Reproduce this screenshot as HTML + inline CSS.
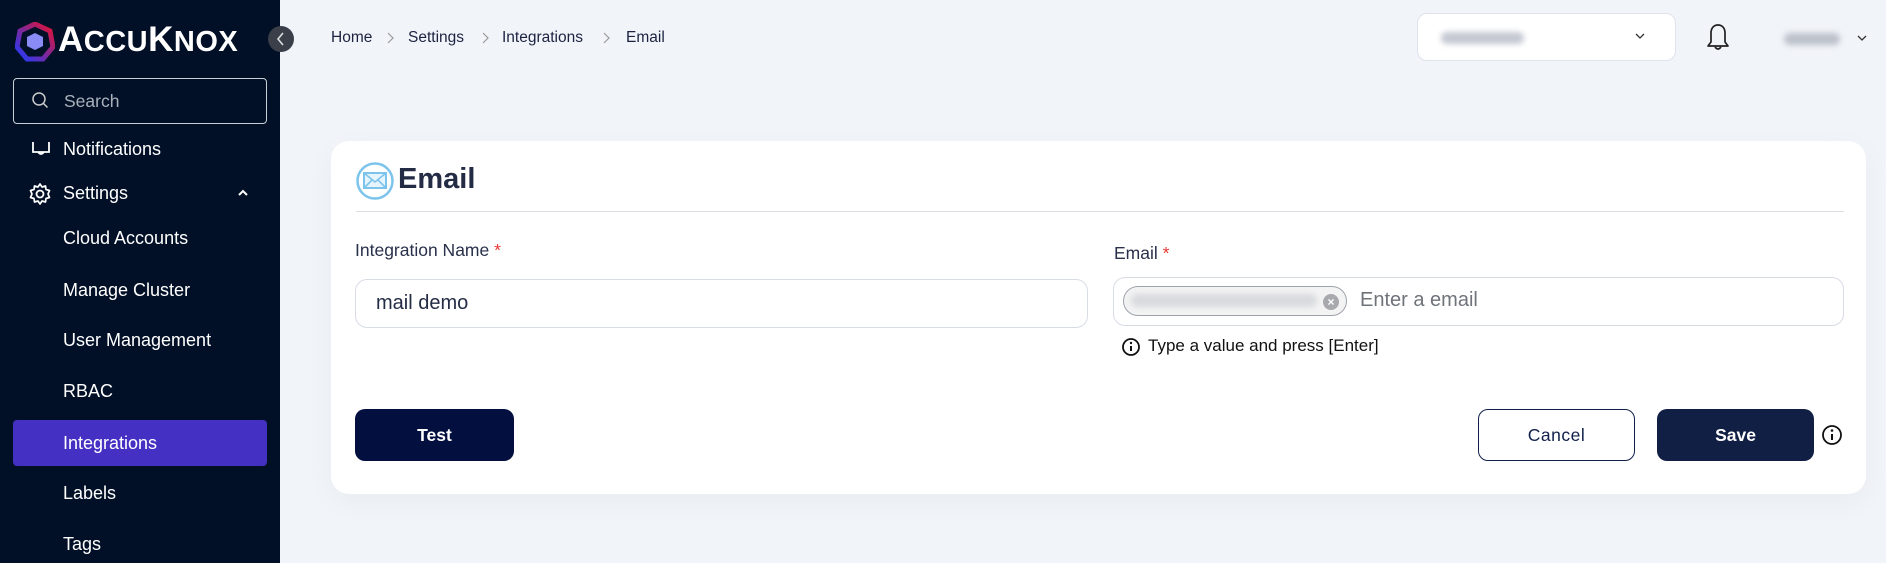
<!DOCTYPE html>
<html><head><meta charset="utf-8"><style>
*{margin:0;padding:0;box-sizing:border-box}
body{width:1886px;height:563px;overflow:hidden;background:#f1f4f9;font-family:"Liberation Sans",sans-serif;position:relative}
.abs{position:absolute}
.sb{left:0;top:0;width:280px;height:563px;background:#011026}
.nav{position:absolute;left:63px;color:#fff;font-size:18px;line-height:22px}
.bc{top:29px;font-size:15.5px;color:#1c2340}
.card{left:331px;top:141px;width:1535px;height:353px;background:#fff;border-radius:18px;box-shadow:0 8px 30px rgba(0,0,0,.04)}
.lbl{font-size:17.5px;color:#28304a}
.req{color:#e53935}
.inp{border:1px solid #d8dce6;border-radius:12px;background:#fff}
.btn{border-radius:10px;font-size:17.5px;font-weight:bold;display:flex;align-items:center;justify-content:center}
</style></head><body>
<div class="abs sb"></div>
<svg class="abs" style="left:15px;top:22px" width="40" height="40" viewBox="0 0 40 40"><defs><linearGradient id="g" x1="0" y1="1" x2="1" y2="0"><stop offset="0" stop-color="#1d3cff"/><stop offset="1" stop-color="#e8112d"/></linearGradient></defs><polygon points="20,2 35,9 38,25 28,37 12,37 2,25 5,9" fill="none" stroke="url(#g)" stroke-width="5"/><polygon points="20,11 28,15 28,24 20,28 12,24 12,15" fill="#8b8bf5"/></svg>
<div class="abs" style="left:58px;top:20px;color:#fff;font-size:35px;font-weight:bold;letter-spacing:0.5px">A<span style="font-size:29px">CCU</span>K<span style="font-size:29px">NOX</span></div>
<div class="abs" style="left:268px;top:26px;width:26px;height:26px;border-radius:50%;background:#3a3f4a"></div>
<svg class="abs" style="left:274px;top:30px" width="14" height="18"><path d="M9 3L4 9l5 6" stroke="#ddd" stroke-width="1.6" fill="none"/></svg>
<div class="abs" style="left:13px;top:78px;width:254px;height:46px;border:1.5px solid #c9ced8;border-radius:4px"></div>
<svg class="abs" style="left:31px;top:91px" width="20" height="20"><circle cx="8" cy="8" r="6" stroke="#ccc" stroke-width="1.5" fill="none"/><path d="M12.5 12.5l4 4" stroke="#ccc" stroke-width="1.5"/></svg>
<div class="abs" style="left:64px;top:91px;color:#aab1bd;font-size:17.5px">Search</div>
<svg class="abs" style="left:30px;top:140px" width="22" height="20"><path d="M3 2v10h16V2M8 12q3 4 6 0" stroke="#fff" stroke-width="1.8" fill="none"/></svg>
<div class="nav" style="top:138px">Notifications</div>
<svg class="abs" style="left:28px;top:182px" width="24" height="24" viewBox="0 0 24 24"><circle cx="12" cy="12" r="3.5" stroke="#fff" stroke-width="1.8" fill="none"/><path d="M12 2l2 3 3.5-1 .5 3.5 3.5 1-1.5 3.5 1.5 3.5-3.5 1-.5 3.5-3.5-1-2 3-2-3-3.5 1-.5-3.5-3.5-1 1.5-3.5L2.5 8.5l3.5-1L6.5 4 10 5z" stroke="#fff" stroke-width="1.7" fill="none" stroke-linejoin="round"/></svg>
<div class="nav" style="top:182px">Settings</div>
<svg class="abs" style="left:237px;top:188px" width="12" height="10"><path d="M2 7l4-4 4 4" stroke="#fff" stroke-width="2" fill="none"/></svg>
<div class="nav" style="top:227px">Cloud Accounts</div>
<div class="nav" style="top:279px">Manage Cluster</div>
<div class="nav" style="top:329px">User Management</div>
<div class="nav" style="top:380px">RBAC</div>
<div class="abs" style="left:13px;top:420px;width:254px;height:46px;background:#4430c2;border-radius:4px"></div>
<div class="nav" style="top:432px">Integrations</div>
<div class="nav" style="top:482px">Labels</div>
<div class="nav" style="top:533px">Tags</div>

<div class="abs bc" style="left:331px">Home</div>
<div class="abs bc" style="left:408px">Settings</div>
<div class="abs bc" style="left:502px">Integrations</div>
<div class="abs bc" style="left:626px">Email</div>
<svg class="abs" style="left:385px;top:31px" width="10" height="14"><path d="M3 2l5 5-5 5" stroke="#999" stroke-width="1.2" fill="none"/></svg>
<svg class="abs" style="left:480px;top:31px" width="10" height="14"><path d="M3 2l5 5-5 5" stroke="#999" stroke-width="1.2" fill="none"/></svg>
<svg class="abs" style="left:601px;top:31px" width="10" height="14"><path d="M3 2l5 5-5 5" stroke="#999" stroke-width="1.2" fill="none"/></svg>

<div class="abs" style="left:1417px;top:13px;width:259px;height:48px;background:#fff;border:1px solid #dfe3ec;border-radius:10px"></div>
<div class="abs" style="left:1441px;top:32px;width:83px;height:12px;background:#c4c8d2;border-radius:6px;filter:blur(3px)"></div>
<svg class="abs" style="left:1634px;top:31px" width="12" height="10"><path d="M2 3l4 4 4-4" stroke="#333" stroke-width="1.3" fill="none"/></svg>
<svg class="abs" style="left:1705px;top:22px" width="26" height="32" viewBox="0 0 26 32"><path d="M13 3c-5 0-7 4-7 8v9l-3 4h20l-3-4v-9c0-4-2-8-7-8zM10 25q3 4 6 0" stroke="#222" stroke-width="1.7" fill="none" stroke-linejoin="round"/></svg>
<div class="abs" style="left:1784px;top:33px;width:56px;height:12px;background:#bcc0c9;border-radius:6px;filter:blur(3px)"></div>
<svg class="abs" style="left:1856px;top:33px" width="12" height="10"><path d="M2 3l4 4 4-4" stroke="#333" stroke-width="1.3" fill="none"/></svg>

<div class="abs card"></div>
<svg class="abs" style="left:355px;top:161px" width="40" height="40" viewBox="0 0 40 40"><circle cx="20" cy="20" r="17.5" stroke="#7cc4ec" stroke-width="2.5" fill="#fff"/><rect x="9" y="12" width="22" height="15" stroke="#7cc4ec" stroke-width="2" fill="#e6f4fc"/><path d="M9 12l11 9 11-9M9 27l8-8M31 27l-8-8" stroke="#7cc4ec" stroke-width="1.6" fill="none"/></svg>
<div class="abs" style="left:398px;top:163px;font-size:29px;font-weight:bold;color:#232b45">Email</div>
<div class="abs" style="left:356px;top:211px;width:1488px;height:1px;background:#dcdde2"></div>

<div class="abs lbl" style="left:355px;top:240px">Integration Name <span class="req">*</span></div>
<div class="abs lbl" style="left:1114px;top:243px">Email <span class="req">*</span></div>
<div class="abs inp" style="left:355px;top:279px;width:733px;height:49px"></div>
<div class="abs" style="left:376px;top:292px;font-size:20px;color:#232b45">mail demo</div>
<div class="abs inp" style="left:1113px;top:277px;width:731px;height:49px"></div>
<div class="abs" style="left:1123px;top:286px;width:224px;height:30px;border:1px solid #9ea3ab;border-radius:15px;background:#f3f3f4"></div>
<div class="abs" style="left:1131px;top:294px;width:186px;height:13px;background:#d8dadd;border-radius:6px;filter:blur(3px)"></div>
<div class="abs" style="left:1323px;top:294px;width:16px;height:16px;border-radius:50%;background:#a7a9ad;color:#fff;font-size:12px;font-weight:bold;text-align:center;line-height:16px">×</div>
<div class="abs" style="left:1360px;top:289px;font-size:20px;color:#6f737a">Enter a email</div>
<svg class="abs" style="left:1121px;top:337px" width="20" height="20"><circle cx="10" cy="10" r="8" stroke="#111" stroke-width="1.8" fill="none"/><path d="M10 9v5" stroke="#111" stroke-width="2"/><circle cx="10" cy="6" r="1.2" fill="#111"/></svg>
<div class="abs" style="left:1148px;top:336px;font-size:17px;color:#111">Type a value and press [Enter]</div>

<div class="abs btn" style="left:355px;top:409px;width:159px;height:52px;background:#020f3f;color:#fff">Test</div>
<div class="abs btn" style="left:1478px;top:409px;width:157px;height:52px;border:1.5px solid #10204a;color:#10204a;font-weight:normal;letter-spacing:.5px">Cancel</div>
<div class="abs btn" style="left:1657px;top:409px;width:157px;height:52px;background:#121f45;color:#fff">Save</div>
<svg class="abs" style="left:1821px;top:424px" width="22" height="22"><circle cx="11" cy="11" r="9" stroke="#111" stroke-width="1.8" fill="none"/><path d="M11 10v6" stroke="#111" stroke-width="2"/><circle cx="11" cy="6.5" r="1.3" fill="#111"/></svg>
</body></html>
